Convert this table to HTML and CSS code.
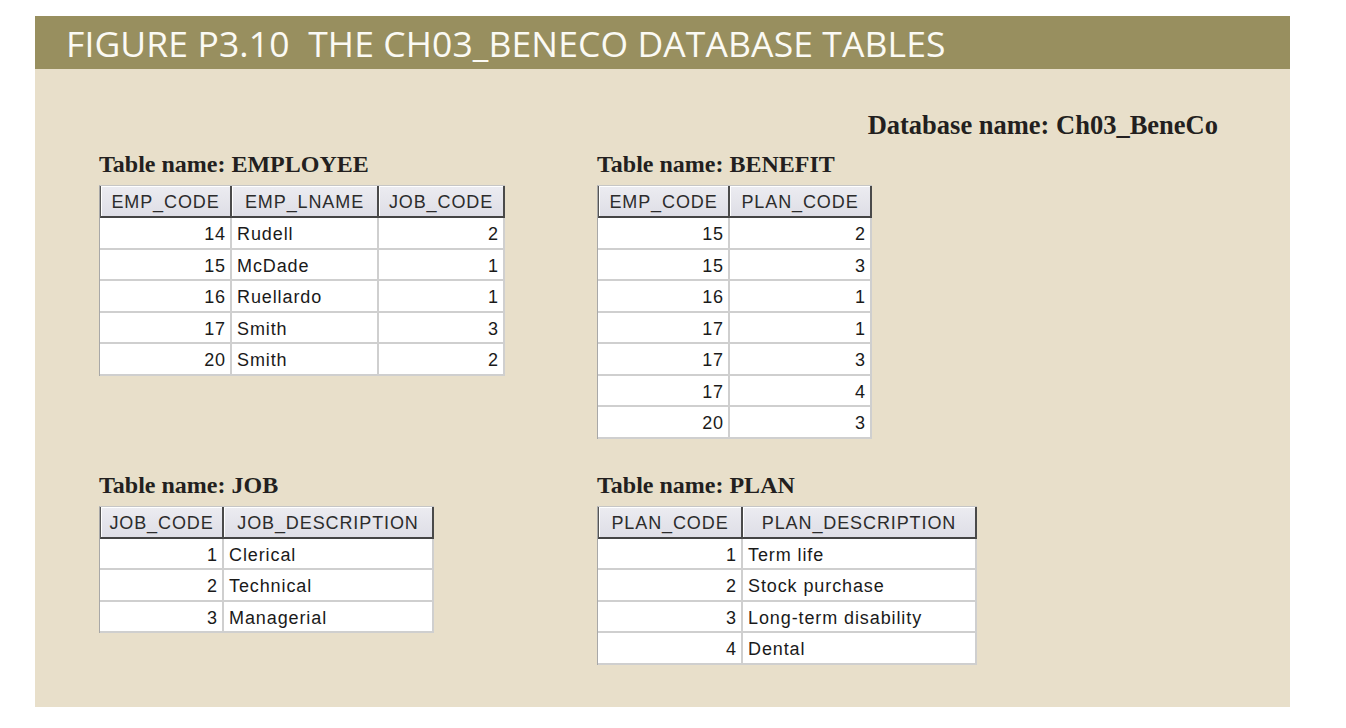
FILE: index.html
```html
<!DOCTYPE html>
<html>
<head>
<meta charset="utf-8">
<link rel="stylesheet" href="styles.css">
</head>
<body>
<div class="figure">
  <div class="fig-header">FIGURE P3.10&nbsp; THE CH03_BENECO DATABASE TABLES</div>
  <div class="fig-body">
    <div class="db-name">Database name: Ch03_BeneCo</div>
    <div class="tables">
      <div class="tblock">
        <div class="tlabel">Table name: EMPLOYEE</div>
        <table class="dt">
          <colgroup><col style="width:132px"><col style="width:147px"><col style="width:126px"></colgroup>
          <tr><th>EMP_CODE</th><th>EMP_LNAME</th><th>JOB_CODE</th></tr>
          <tr><td class="n">14</td><td>Rudell</td><td class="n">2</td></tr>
          <tr><td class="n">15</td><td>McDade</td><td class="n">1</td></tr>
          <tr><td class="n">16</td><td>Ruellardo</td><td class="n">1</td></tr>
          <tr><td class="n">17</td><td>Smith</td><td class="n">3</td></tr>
          <tr><td class="n">20</td><td>Smith</td><td class="n">2</td></tr>
        </table>
      </div>
      <div class="tblock">
        <div class="tlabel">Table name: BENEFIT</div>
        <table class="dt">
          <colgroup><col style="width:132px"><col style="width:142px"></colgroup>
          <tr><th>EMP_CODE</th><th>PLAN_CODE</th></tr>
          <tr><td class="n">15</td><td class="n">2</td></tr>
          <tr><td class="n">15</td><td class="n">3</td></tr>
          <tr><td class="n">16</td><td class="n">1</td></tr>
          <tr><td class="n">17</td><td class="n">1</td></tr>
          <tr><td class="n">17</td><td class="n">3</td></tr>
          <tr><td class="n">17</td><td class="n">4</td></tr>
          <tr><td class="n">20</td><td class="n">3</td></tr>
        </table>
      </div>
      <div class="tblock">
        <div class="tlabel">Table name: JOB</div>
        <table class="dt">
          <colgroup><col style="width:124px"><col style="width:210px"></colgroup>
          <tr><th>JOB_CODE</th><th>JOB_DESCRIPTION</th></tr>
          <tr><td class="n">1</td><td>Clerical</td></tr>
          <tr><td class="n">2</td><td>Technical</td></tr>
          <tr><td class="n">3</td><td>Managerial</td></tr>
        </table>
      </div>
      <div class="tblock">
        <div class="tlabel">Table name: PLAN</div>
        <table class="dt">
          <colgroup><col style="width:145px"><col style="width:234px"></colgroup>
          <tr><th>PLAN_CODE</th><th>PLAN_DESCRIPTION</th></tr>
          <tr><td class="n">1</td><td>Term life</td></tr>
          <tr><td class="n">2</td><td>Stock purchase</td></tr>
          <tr><td class="n">3</td><td>Long-term disability</td></tr>
          <tr><td class="n">4</td><td>Dental</td></tr>
        </table>
      </div>
    </div>
  </div>
</div>
</body>
</html>
```
FILE: styles.css
```css
html, body {
  margin: 0;
  padding: 0;
  background: #ffffff;
}

.figure {
  margin: 16px 0 0 35px;
  width: 1255px;
  height: 691px;
  background: #e8dfca;
}

.fig-header {
  height: 53px;
  box-sizing: border-box;
  padding: 2px 0 0 31px;
  background: #988f5f;
  color: #fbfaf4;
  font-family: "Open Sans", "Noto Sans", sans-serif;
  font-size: 35.5px;
  line-height: 51px;
  letter-spacing: 0.1px;
  white-space: nowrap;
}

.fig-body {
  padding: 41px 72px 0 64px;
}

.db-name {
  text-align: right;
  font-family: "Liberation Serif", serif;
  font-weight: bold;
  font-size: 26.5px;
  line-height: 30px;
  color: #231f20;
}

.tables {
  margin-top: 9px;
  display: grid;
  grid-template-columns: 498px auto;
  row-gap: 31px;
  align-items: start;
}

.tlabel {
  font-family: "Liberation Serif", serif;
  font-weight: bold;
  font-size: 24px;
  line-height: 30px;
  color: #231f20;
  margin-bottom: 6px;
  white-space: nowrap;
}

.dt {
  border-collapse: separate;
  border-spacing: 0;
  table-layout: fixed;
  font-family: "Liberation Sans", Arial, sans-serif;
  font-size: 18px;
  letter-spacing: 0.9px;
  border-left: 1px solid #a8a8a8;
  border-top: 1px solid #c6c6c6;
}

.dt th {
  padding: 3px 4px 0;
  line-height: 27px;
  font-weight: normal;
  color: #2c2c2c;
  text-align: center;
  background: linear-gradient(#ececf1, #dedee6);
  border-right: 2px solid #4a4a4a;
  border-bottom: 2px solid #444444;
  box-shadow: inset 1px 1px 0 #ffffff;
}

.dt th:first-child {
  border-left: 1px solid #555555;
}

.dt td {
  padding: 4px 5px 0;
  line-height: 25.5px;
  background: #ffffff;
  color: #1a1a1a;
  border-right: 2px solid #cfcfcf;
  border-bottom: 2px solid #cfcfcf;
  white-space: nowrap;
}

.dt td.n {
  text-align: right;
  padding-right: 4px;
}
```
